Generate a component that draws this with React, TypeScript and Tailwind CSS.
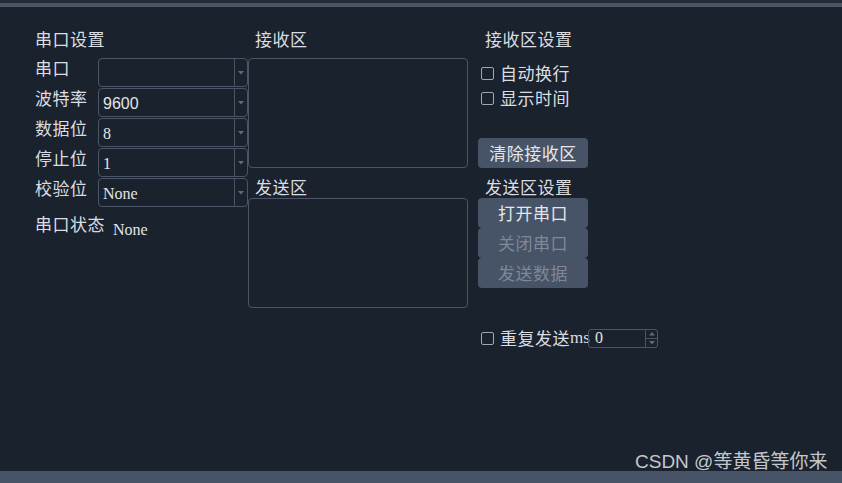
import React from "react";

const CJK = "font-['Noto_Sans_CJK_SC',sans-serif]";

function Combo({ value, serif }: { value: string; serif?: boolean }) {
  return (
    <div className="w-[150px] h-[29px] border border-[#4a5568] rounded-[4px] flex">
      <div
        className={`flex-1 flex items-center pl-[4px] pt-[3px] text-[16px] tracking-normal text-[#e3e5e8] ${
          serif ? "font-['Liberation_Serif',serif]" : "font-['Liberation_Sans',sans-serif]"
        }`}
      >
        {value}
      </div>
      <div className="w-[13px] border-l border-[#4a5568] flex items-center justify-center">
        <svg width="6" height="4" viewBox="0 0 6 4">
          <polygon points="0,0 6,0 3,3.5" fill="#5f6a7c" />
        </svg>
      </div>
    </div>
  );
}

function Box() {
  return <div className="w-[13px] h-[13px] border border-[#a3a8af] rounded-[2px]" />;
}

function Check({ label }: { label: React.ReactNode }) {
  return (
    <div className="h-[20px] flex items-center pl-[3px]">
      <Box />
      <div className="ml-[6px] leading-[20px]">{label}</div>
    </div>
  );
}

function Btn({ children, disabled }: { children: React.ReactNode; disabled?: boolean }) {
  return (
    <div
      className={`w-[110px] h-[30px] rounded-[4px] bg-[#475366] flex items-center justify-center ${
        disabled ? "text-[#7e8898]" : "text-[#e4e6e9]"
      }`}
    >
      {children}
    </div>
  );
}

export default function App() {
  const rows: { label: string; value: string; serif?: boolean }[] = [
    { label: "串口", value: "" },
    { label: "波特率", value: "9600" },
    { label: "数据位", value: "8", serif: true },
    { label: "停止位", value: "1", serif: true },
    { label: "校验位", value: "None", serif: true },
  ];
  return (
    <div
      className={`relative w-[842px] h-[483px] bg-[#1a222d] flex flex-col overflow-hidden text-[17px] tracking-[0.5px] text-[#dadee3] ${CJK}`}
    >
      <div className="h-[3px] bg-[#232b36]" />
      <div className="h-[4px] bg-[#4a5466]" />
      <div className="flex-1 flex pl-[35px] pt-[22px]">
        {/* column 1 */}
        <div className="w-[213px] flex flex-col">
          <div className="h-[20px] leading-[20px]">串口设置</div>
          <div className="mt-[9px] flex flex-col">
            {rows.map((r) => (
              <div key={r.label} className="h-[30px] flex">
                <div className="w-[63px] leading-[20px]">{r.label}</div>
                <Combo value={r.value} serif={r.serif} />
              </div>
            ))}
          </div>
          <div className="mt-[6px] h-[20px] flex">
            <div className="w-[78px] leading-[20px]">串口状态</div>
            <div className="pt-[8px] leading-[16px] text-[16px] tracking-normal font-['Liberation_Serif',serif] text-[#e3e5e8]">
              None
            </div>
          </div>
        </div>

        {/* column 2 */}
        <div className="w-[220px] flex flex-col">
          <div className="h-[20px] leading-[20px] pl-[7px]">接收区</div>
          <div className="mt-[9px] h-[110px] border border-[#4a5568] rounded-[4px]" />
          <div className="mt-[9px] h-[20px] leading-[20px] pl-[7px]">发送区</div>
          <div className="mt-[1px] h-[110px] border border-[#4a5568] rounded-[4px]" />
        </div>

        {/* column 3 */}
        <div className="ml-[10px] w-[190px] flex flex-col">
          <div className="h-[20px] leading-[20px] pl-[7px]">接收区设置</div>
          <div className="mt-[14px]">
            <Check label="自动换行" />
          </div>
          <div className="mt-[5px]">
            <Check label="显示时间" />
          </div>
          <div className="mt-[30px]">
            <Btn>清除接收区</Btn>
          </div>
          <div className="mt-[9px] h-[20px] leading-[20px] pl-[7px]">发送区设置</div>
          <div className="mt-[1px] flex flex-col">
            <Btn>打开串口</Btn>
            <Btn disabled>关闭串口</Btn>
            <Btn disabled>发送数据</Btn>
          </div>
          <div className="mt-[40px] h-[20px] flex items-center">
            <div className="h-[20px] flex items-center pl-[3px]">
              <Box />
              <div className="ml-[6px] leading-[20px] w-[70px]">重复发送</div>
              <div className="leading-[20px] tracking-normal font-['Liberation_Serif',serif] w-[18px]">ms</div>
            </div>
            <div className="w-[70px] h-[19px] border border-[#4a5568] rounded-[3px] flex">
              <div className="flex-1 flex items-center pl-[6px] text-[16px] tracking-normal font-['Liberation_Serif',serif] text-[#e3e5e8]">
                0
              </div>
              <div className="w-[12px] border-l border-[#4a5568] flex flex-col">
                <div className="flex-1 flex items-center justify-center border-b border-[#4a5568]">
                  <svg width="6" height="4" viewBox="0 0 6 4">
                    <polygon points="0,3.5 6,3.5 3,0" fill="#5f6a7c" />
                  </svg>
                </div>
                <div className="flex-1 flex items-center justify-center">
                  <svg width="6" height="4" viewBox="0 0 6 4">
                    <polygon points="0,0 6,0 3,3.5" fill="#5f6a7c" />
                  </svg>
                </div>
              </div>
            </div>
          </div>
        </div>
      </div>
      <div className="h-[12px] bg-[#475366]" />
      <div className="absolute left-[635px] top-[451px] leading-[22px] text-[19px] tracking-normal text-[#c4c8cd] font-['Liberation_Sans','Noto_Sans_CJK_SC',sans-serif]">
        CSDN @等黄昏等你来
      </div>
    </div>
  );
}
